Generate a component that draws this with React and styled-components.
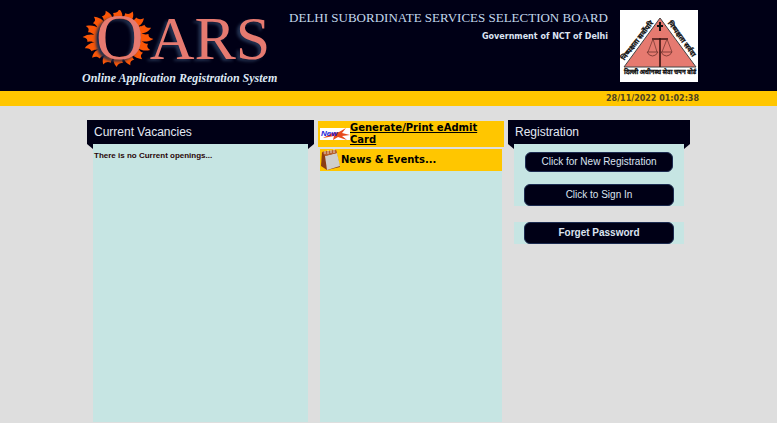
import React from "react";
import styled, { createGlobalStyle, css } from "styled-components";

const navy = "#000016"
const amber = "#ffc600"
const aqua = "#c6e5e3"

const GlobalStyle = createGlobalStyle`
    * {
        box-sizing: border-box;
    }
    body {
        margin: 0;
        min-height: 100vh;
        background: #dedede;
        font-family: "Liberation Sans", Arial, sans-serif;
    }
    h1, h2, p {
        margin: 0;
    }
`
const Header = styled.header`
    background: ${navy};
`
const HeaderInner = styled.div`
    display: flex;
    align-items: flex-start;
    max-width: 621px;
    margin: 0 auto;
    padding: 10px 1px 9px 4px;
`
const Brand = styled.div`
    flex: none;
`
const Logo = styled.h1`
    position: relative;
    display: flex;
    align-items: baseline;
    gap: 6px;
    height: 60px;
    padding-left: 14px;
    font-family: "Liberation Serif", "Times New Roman", serif;
    font-size: 62px;
    line-height: 54px;
    font-weight: normal;
    color: #e67a70;
    text-shadow: -3px 2px 3px #22304f;
`
const LogoInitial = styled.span`
    position: relative;
    font-size: 66px;
`
const Sun = styled.svg`
    position: absolute;
    left: 0;
    top: 0;
    width: 72px;
    height: 58px;
`
const Tagline = styled.p`
    font-family: "Liberation Serif", "Times New Roman", serif;
    font-size: 12px;
    font-style: italic;
    font-weight: bold;
    line-height: 12px;
    padding-top: 2px;
    height: 12px;
    color: #dde7f3;
`
const Board = styled.div`
    flex: 1;
    text-align: right;
    padding-right: 12px;
    white-space: nowrap;
`
const BoardName = styled.p`
    font-family: "Liberation Serif", "Times New Roman", serif;
    font-size: 13px;
    line-height: 16px;
    color: #c3d8ec;
`
const Government = styled.p`
    margin-top: 4px;
    font-family: "DejaVu Sans", Verdana, sans-serif;
    font-size: 8px;
    font-weight: bold;
    line-height: 14px;
    color: #dde4f2;
`
const Emblem = styled.svg`
    flex: none;
    width: 78px;
    height: 72px;
    background: #fff;
`
const DateBar = styled.div`
    background: ${amber};
`
const DateInner = styled.div`
    max-width: 621px;
    margin: 0 auto;
    text-align: right;
    font-family: "DejaVu Sans", Verdana, sans-serif;
    font-size: 8px;
    font-weight: bold;
    line-height: 15px;
    color: #4d4420;
`
const Main = styled.main`
    display: grid;
    grid-template-columns: 227fr 186fr 182fr;
    gap: 4px;
    max-width: 621px;
    margin: 0 auto;
    padding: 14px 9px 0;
`
const PanelTitle = styled.h2`
    position: relative;
    height: 24px;
    padding-left: 7px;
    background: ${navy};
    font-size: 12px;
    font-weight: normal;
    line-height: 24px;
    color: #e3e8f3;
    &::before, &::after {
        content: "";
        position: absolute;
        top: 24px;
        width: 6px;
        height: 5px;
        background: ${navy};
    }
    &::before {
        left: 0;
        clip-path: polygon(0 0, 100% 0, 100% 100%);
    }
    &::after {
        right: 0;
        clip-path: polygon(0 0, 100% 0, 0 100%);
    }
`
const PanelBody = styled.div`
    margin: 0 6px;
    background: ${aqua};
    ${({tall}) => tall && css`
        min-height: 278px;
    `}
`
const Notice = styled.p`
    padding: 6px 1px;
    font-size: 8px;
    font-weight: bold;
    line-height: 12px;
    color: #2a0508;
`
const NewsColumn = styled.section`
    display: flex;
    flex-direction: column;
    gap: 2px;
    padding-top: 1px;
`
const NewsStrip = styled.div`
    display: flex;
    align-items: center;
    min-height: ${({link}) => link ? '26px' : '22px'};
    margin: ${({link}) => link ? '0' : '0 2px'};
    padding-left: ${({link}) => link ? '2px' : '0'};
    background: ${amber};
    font-family: "DejaVu Sans", Verdana, sans-serif;
    font-size: 10px;
    font-weight: bold;
    line-height: 12px;
    color: #000;
`
const NewsLink = styled.a`
    color: #000;
`
const NewsList = styled.div`
    flex: 1;
    margin: -2px 2px 0;
    background: ${aqua};
`
const NewIcon = styled.svg`
    flex: none;
    width: 30px;
    height: 12px;
`
const NoteIcon = styled.svg`
    flex: none;
    width: 21px;
    height: 22px;
`
const Actions = styled(PanelBody)`
    display: flex;
    flex-direction: column;
    align-items: center;
    gap: 12px;
    padding-top: ${({first}) => first ? '8px' : '0'};
    margin-top: ${({first}) => first ? '0' : '16px'};
`
const ActionButton = styled.button`
    width: ${({small}) => small ? '148px' : '150px'};
    height: ${({small}) => small ? '20px' : '22px'};
    padding: 0;
    border: 1px solid #1c2b50;
    border-radius: 6px;
    background: ${navy};
    font-family: inherit;
    font-size: 10px;
    font-weight: ${({bold}) => bold ? 'bold' : 'normal'};
    line-height: 12px;
    color: #dbe3f0;
    cursor: pointer;
`

const rays = Array.from({ length: 16 }, (_, i) => i * 360 / 16)

const SunIcon = () => (
    <Sun viewBox="0 0 72 58" aria-hidden="true">
        <g transform="translate(36 28) scale(1.22 1)" fill="#fb5607">
            {rays.map((angle) => (
                <path key={angle} transform={`rotate(${angle})`} d="M-5 -18 C-4 -21 -3 -22 -4 -25 C-1 -25 0 -26 1 -29 C4 -25 4 -22 3 -18 Z" />
            ))}
            <circle r="20" />
        </g>
        <ellipse cx="37" cy="28" rx="22" ry="19" fill={navy} />
    </Sun>
)

const BoardEmblem = () => (
    <Emblem viewBox="0 0 78 72" role="img" aria-label="DSSSB emblem">
        <path d="M40 8 L76 57 H4 Z" fill="#e67a70" stroke="#444" strokeWidth="1" />
        <path d="M40 12 V21 M37 16 H43" stroke="#111" strokeWidth="2" />
        <path d="M40 28 V57 M32 29 H48" stroke="#3a1512" strokeWidth="1.6" />
        <path d="M33 29 L28 42 M33 29 L37 42 M47 29 L42 42 M47 29 L52 42" stroke="#6d302b" strokeWidth="0.7" fill="none" />
        <path d="M27 42 H38 Q36 46 32.500 46 Q29 46 27 42 Z M41 42 H52 Q50 46 46.500 46 Q43 46 41 42 Z" stroke="#6d302b" strokeWidth="0.8" fill="none" />
        <g fontFamily="'Noto Sans Devanagari', 'Noto Sans', sans-serif" fontWeight="bold" fontSize="7" textAnchor="middle" fill="#111" stroke="#111" strokeWidth="0.3">
            <text transform="translate(19 32) rotate(-52)">निष्पक्षता सर्वोपरि</text>
            <text transform="translate(60 30) rotate(54)">निष्पक्षता सर्वदा</text>
            <text x="40" y="64" fontSize="6">दिल्ली अधीनस्थ सेवा चयन बोर्ड</text>
        </g>
    </Emblem>
)

const NewBadge = () => (
    <NewIcon viewBox="0 0 30 12" aria-hidden="true">
        <rect width="30" height="12" fill="#fff" />
        <path d="M12 5 L19 4 L26 0 L22 5 L30 7 L22 8 L27 12 L18 9 L13 12 L14 8 L3 10 Z" fill="#e84a1c" />
        <text x="1" y="8" fontFamily="Liberation Sans" fontSize="8" fontWeight="bold" fontStyle="italic" fill="#2222d8">New</text>
    </NewIcon>
)

const NotePad = () => (
    <NoteIcon viewBox="0 0 21 22" aria-hidden="true">
        <path d="M2 3 L16 1 L20 18 L7 21 L1 17 Z" fill="#8a3d14" />
        <path d="M5 7 L17 4 L20 17 L7 21 Z" fill="#cfcecc" />
        <path d="M2 3 L16 1 L17 4 L5 7 Z" fill="#b9602c" />
        <path d="M5 2 V5 M8 1 V5 M11 1 V4 M14 0 V4" stroke="#eee" strokeWidth="0.8" />
    </NoteIcon>
)

const App = () => {
    return (
        <>
            <GlobalStyle />
            <Header>
                <HeaderInner>
                    <Brand>
                        <Logo aria-label="OARS">
                            <SunIcon />
                            <LogoInitial>O</LogoInitial>
                            <span>ARS</span>
                        </Logo>
                        <Tagline>Online Application Registration System</Tagline>
                    </Brand>
                    <Board>
                        <BoardName>DELHI SUBORDINATE SERVICES SELECTION BOARD</BoardName>
                        <Government>Government of NCT of Delhi</Government>
                    </Board>
                    <BoardEmblem />
                </HeaderInner>
            </Header>
            <DateBar>
                <DateInner>28/11/2022 01:02:38</DateInner>
            </DateBar>
            <Main>
                <section>
                    <PanelTitle>Current Vacancies</PanelTitle>
                    <PanelBody tall>
                        <Notice>There is no Current openings...</Notice>
                    </PanelBody>
                </section>
                <NewsColumn>
                    <NewsStrip link>
                        <NewBadge />
                        <NewsLink href="#eadmit">Generate/Print eAdmit Card</NewsLink>
                    </NewsStrip>
                    <NewsStrip>
                        <NotePad />
                        News &amp; Events...
                    </NewsStrip>
                    <NewsList />
                </NewsColumn>
                <section>
                    <PanelTitle>Registration</PanelTitle>
                    <Actions first>
                        <ActionButton type="button" small>Click for New Registration</ActionButton>
                        <ActionButton type="button">Click to Sign In</ActionButton>
                    </Actions>
                    <Actions>
                        <ActionButton type="button" bold>Forget Password</ActionButton>
                    </Actions>
                </section>
            </Main>
        </>
    )
}
export default App
